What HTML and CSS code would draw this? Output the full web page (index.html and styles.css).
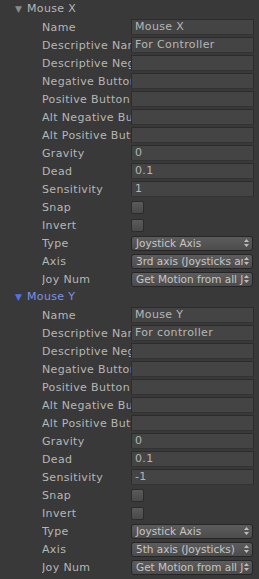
FILE: index.html
```html
<!DOCTYPE html>
<html lang="en">
<head>
    <meta charset="UTF-8">
    <title>Input Manager</title>
    <link rel="stylesheet" href="styles.css">
</head>
<body>
    <div class="axis">
        <div class="foldout"><span class="arrow">&#9660;</span>Mouse X</div>
        <div class="row"><span class="label">Name</span><div class="field">Mouse X</div></div>
        <div class="row"><span class="label">Descriptive Name</span><div class="field">For Controller</div></div>
        <div class="row"><span class="label">Descriptive Negative Name</span><div class="field"></div></div>
        <div class="row"><span class="label">Negative Button</span><div class="field"></div></div>
        <div class="row"><span class="label">Positive Button</span><div class="field"></div></div>
        <div class="row"><span class="label">Alt Negative Button</span><div class="field"></div></div>
        <div class="row"><span class="label">Alt Positive Button</span><div class="field"></div></div>
        <div class="row"><span class="label">Gravity</span><div class="field">0</div></div>
        <div class="row"><span class="label">Dead</span><div class="field">0.1</div></div>
        <div class="row"><span class="label">Sensitivity</span><div class="field">1</div></div>
        <div class="row"><span class="label">Snap</span><div class="check"></div></div>
        <div class="row"><span class="label">Invert</span><div class="check"></div></div>
        <div class="row"><span class="label">Type</span><div class="popup"><span class="value">Joystick Axis</span><svg class="updown" width="5" height="8" viewBox="0 0 5 8"><path d="M2.5 0L5 3H0z M2.5 8L5 5H0z" fill="#bdbdbd"/></svg></div></div>
        <div class="row"><span class="label">Axis</span><div class="popup"><span class="value">3rd axis (Joysticks and Scrollwheel)</span><svg class="updown" width="5" height="8" viewBox="0 0 5 8"><path d="M2.5 0L5 3H0z M2.5 8L5 5H0z" fill="#bdbdbd"/></svg></div></div>
        <div class="row"><span class="label">Joy Num</span><div class="popup"><span class="value">Get Motion from all Joysticks</span><svg class="updown" width="5" height="8" viewBox="0 0 5 8"><path d="M2.5 0L5 3H0z M2.5 8L5 5H0z" fill="#bdbdbd"/></svg></div></div>
    </div>
    <div class="axis">
        <div class="foldout selected"><span class="arrow">&#9660;</span>Mouse Y</div>
        <div class="row"><span class="label">Name</span><div class="field">Mouse Y</div></div>
        <div class="row"><span class="label">Descriptive Name</span><div class="field">For controller</div></div>
        <div class="row"><span class="label">Descriptive Negative Name</span><div class="field"></div></div>
        <div class="row"><span class="label">Negative Button</span><div class="field"></div></div>
        <div class="row"><span class="label">Positive Button</span><div class="field"></div></div>
        <div class="row"><span class="label">Alt Negative Button</span><div class="field"></div></div>
        <div class="row"><span class="label">Alt Positive Button</span><div class="field"></div></div>
        <div class="row"><span class="label">Gravity</span><div class="field">0</div></div>
        <div class="row"><span class="label">Dead</span><div class="field">0.1</div></div>
        <div class="row"><span class="label">Sensitivity</span><div class="field">-1</div></div>
        <div class="row"><span class="label">Snap</span><div class="check"></div></div>
        <div class="row"><span class="label">Invert</span><div class="check"></div></div>
        <div class="row"><span class="label">Type</span><div class="popup"><span class="value">Joystick Axis</span><svg class="updown" width="5" height="8" viewBox="0 0 5 8"><path d="M2.5 0L5 3H0z M2.5 8L5 5H0z" fill="#bdbdbd"/></svg></div></div>
        <div class="row"><span class="label">Axis</span><div class="popup"><span class="value">5th axis (Joysticks)</span><svg class="updown" width="5" height="8" viewBox="0 0 5 8"><path d="M2.5 0L5 3H0z M2.5 8L5 5H0z" fill="#bdbdbd"/></svg></div></div>
        <div class="row"><span class="label">Joy Num</span><div class="popup"><span class="value">Get Motion from all Joysticks</span><svg class="updown" width="5" height="8" viewBox="0 0 5 8"><path d="M2.5 0L5 3H0z M2.5 8L5 5H0z" fill="#bdbdbd"/></svg></div></div>
    </div>
</body>
</html>
```

FILE: styles.css
```css
body {
    background-color: #393939;
    color: #b6b6b6;
    font-family: "DejaVu Sans", Verdana, sans-serif;
    font-size: 11px;
    letter-spacing: 0.35px;
    margin: 0;
    padding: 0;
}

.foldout {
    height: 18px;
    line-height: 18px;
    display: flex;
    align-items: center;
    padding-left: 15px;
    white-space: nowrap;
}

.foldout .arrow {
    font-size: 9px;
    width: 12px;
    color: #8a8a8a;
}

.foldout.selected {
    color: #7d90ec;
}

.foldout.selected .arrow {
    color: #4f73e6;
}

.row {
    height: 18px;
    display: flex;
    align-items: center;
    padding-left: 42px;
}

.label {
    width: 89px;
    overflow: hidden;
    white-space: nowrap;
    flex-shrink: 0;
}

.field {
    width: 118px;
    height: 14px;
    line-height: 14px;
    background-color: #444;
    border: 1px solid #2c2c2c;
    border-bottom-color: #333;
    padding-left: 3px;
    overflow: hidden;
    white-space: nowrap;
}

.check {
    width: 11px;
    height: 11px;
    background: linear-gradient(#5a5a5a, #4a4a4a);
    border: 1px solid #2c2c2c;
    border-radius: 2px;
}

.popup {
    width: 120px;
    height: 13px;
    display: flex;
    align-items: center;
    background: linear-gradient(#5c5c5c, #4c4c4c);
    border: 1px solid #262626;
    border-radius: 3px;
    color: #c6c6c6;
    font-size: 10.5px;
    letter-spacing: 0;
    overflow: hidden;
}

.popup .value {
    flex: 1;
    padding-left: 4px;
    white-space: nowrap;
    overflow: hidden;
}

.popup .updown {
    flex-shrink: 0;
    margin: 0 3px 0 1px;
}
```
